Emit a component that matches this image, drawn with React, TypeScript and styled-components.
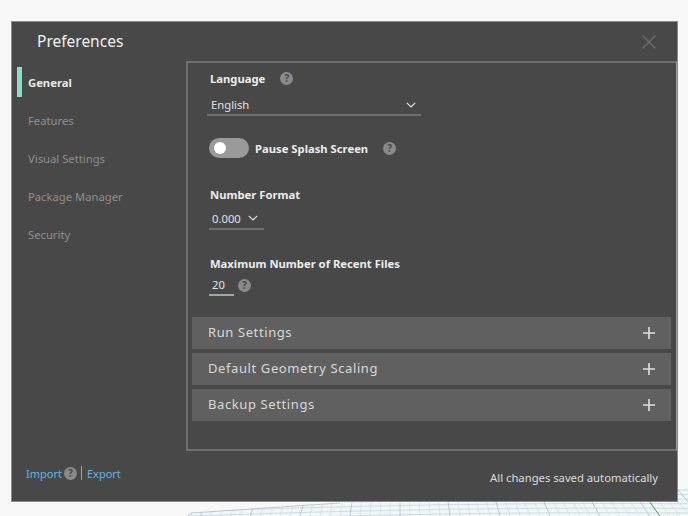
import styled, { createGlobalStyle } from "styled-components";

const GlobalStyle = createGlobalStyle`
    html, body {
        margin: 0;
        height: 100%;
        background: #f8f8f8;
        overflow: hidden;
    }
    * {
        box-sizing: border-box;
    }
`

const Help = () => <HelpDot>?</HelpDot>

const Chevron = () => (
    <svg width="10" height="6" viewBox="0 0 10 6" fill="none" stroke="#e6e6e6" strokeWidth="1.2">
        <path d="M0.8 0.8 L5 5 L9.2 0.8" />
    </svg>
)

const Plus = () => (
    <svg width="14" height="14" viewBox="0 0 14 14" stroke="#e0e0e0" strokeWidth="1.6">
        <path d="M7 1 V13 M1 7 H13" />
    </svg>
)

// workplane grid that shows behind the dialog, coordinates are page pixels
const Grid = () => {
    const fan = []
    for (let i = -24; i < 32; i++) {
        const bottom = i * 10
        const x = 400 + bottom
        const topX = 400 + (bottom * (486 - 160)) / 356
        fan.push(<path key={i} d={`M${topX} 486 L${x} 516`} stroke={i % 5 === 0 ? "#a4b7be" : "#cbdce3"} />)
    }
    const rows = []
    for (let i = 0; i < 7; i++) {
        const y = 490 + i * 4.6
        rows.push(<path key={i} d={`M180 ${y + 8} Q450 ${y - 2} 688 ${y}`} />)
    }
    return (
        <GridSvg viewBox="0 0 688 516" width="688" height="516" fill="none" stroke="#bfd1d8" strokeWidth="0.7">
            <clipPath id="plate">
                <path d="M188 516 L191 513 L340 503 L500 497 L688 488 L688 516 Z" />
            </clipPath>
            <g clipPath="url(#plate)">
                <rect x="180" y="486" width="508" height="30" fill="#f1f7f9" stroke="none" />
                {rows}
                {fan}
                <path d="M649 501 L660 516" stroke="#3caa55" strokeWidth="1" />
            </g>
            <path d="M188 516 L191 513 L340 503" stroke="#a4b7be" />
        </GridSvg>
    )
}

export default function App() {
    const tabs = ["General", "Features", "Visual Settings", "Package Manager", "Security"]
    const sections = ["Run Settings", "Default Geometry Scaling", "Backup Settings"]

    return (
        <>
            <GlobalStyle />
            <Grid />
            <Page>
                <Modal>
                    <Header>
                        <Title>Preferences</Title>
                        <CloseIcon width="14" height="14" viewBox="0 0 14 14" stroke="#6c6c6c" strokeWidth="1.4">
                            <path d="M0.5 0.5 L13.5 13.5 M13.5 0.5 L0.5 13.5" />
                        </CloseIcon>
                    </Header>
                    <Body>
                        <Sidebar>
                            {tabs.map((tab, i) => (
                                <Tab key={tab} $active={i === 0}>{tab}</Tab>
                            ))}
                        </Sidebar>
                        <Panel>
                            <Settings>
                                <LabelRow>
                                    <Label>Language</Label>
                                    <Help />
                                </LabelRow>
                                <LanguageSelect>
                                    <span>English</span>
                                    <Chevron />
                                </LanguageSelect>
                                <ToggleRow>
                                    <Toggle><Knob /></Toggle>
                                    <Label>Pause Splash Screen</Label>
                                    <Help />
                                </ToggleRow>
                                <FormatLabel>Number Format</FormatLabel>
                                <FormatSelect>
                                    <span>0.000</span>
                                    <Chevron />
                                </FormatSelect>
                                <RecentLabel>Maximum Number of Recent Files</RecentLabel>
                                <RecentRow>
                                    <RecentInput>20</RecentInput>
                                    <Help />
                                </RecentRow>
                            </Settings>
                            <Sections>
                                {sections.map((s) => (
                                    <Section key={s}>
                                        <span>{s}</span>
                                        <Plus />
                                    </Section>
                                ))}
                            </Sections>
                        </Panel>
                    </Body>
                    <Footer>
                        <FooterLinks>
                            <FooterLink>Import</FooterLink>
                            <Help />
                            <Divider />
                            <FooterLink>Export</FooterLink>
                        </FooterLinks>
                        <Saved>All changes saved automatically</Saved>
                    </Footer>
                </Modal>
            </Page>
        </>
    )
}

const GridSvg = styled.svg`
    position: absolute;
    left: 0;
    top: 0;
`

const Page = styled.div`
    position: relative;
    padding: 21px 0 0 11px;
    font-family: "Noto Sans", "Open Sans", sans-serif;
`

const Modal = styled.div`
    width: 667px;
    height: 481px;
    background: #484848;
    border: 1px solid #8a8a8a;
    display: flex;
    flex-direction: column;
`

const Header = styled.div`
    height: 39px;
    flex-shrink: 0;
    display: flex;
    align-items: center;
    justify-content: space-between;
    padding: 0 21px 0 25px;
`

const Title = styled.h1`
    margin: -2px 0 0;
    font-size: 15.5px;
    font-weight: 400;
    color: #f0f0f0;
`

const CloseIcon = styled.svg`
    display: block;
`

const Body = styled.div`
    height: 390px;
    flex-shrink: 0;
    display: flex;
`

const Sidebar = styled.div`
    width: 174px;
    flex-shrink: 0;
    padding: 6px 0 0 5px;
    display: flex;
    flex-direction: column;
    gap: 8px;
`

const Tab = styled.div<{ $active?: boolean }>`
    height: 30px;
    display: flex;
    align-items: center;
    padding: 1px 0 0 6px;
    border-left: 5px solid ${(p) => (p.$active ? "#8fdccf" : "transparent")};
    font-size: 11.25px;
    font-weight: ${(p) => (p.$active ? 700 : 400)};
    color: ${(p) => (p.$active ? "#e8e8e8" : "#8f8f8f")};
`

const Panel = styled.div`
    flex: 1;
    border: 2px solid #6e6e6e;
    border-right-width: 1px;
    border-right-color: #a0a0a0;
    padding: 0 5px 0 4px;
    display: flex;
    flex-direction: column;
`

const Settings = styled.div`
    padding: 6px 0 0 18px;
    height: 254px;
    flex-shrink: 0;
    display: flex;
    flex-direction: column;
    align-items: flex-start;
`

const Label = styled.span`
    font-size: 11.25px;
    font-weight: 700;
    color: #ececec;
`

const LabelRow = styled.div`
    height: 18px;
    display: flex;
    align-items: center;
    gap: 15px;
`

const HelpDot = styled.span`
    width: 13px;
    height: 13px;
    flex-shrink: 0;
    border-radius: 50%;
    background: #8a8a8a;
    color: #484848;
    font-size: 10px;
    font-weight: 700;
    line-height: 13px;
    text-align: center;
`

const LanguageSelect = styled.div`
    width: 214px;
    height: 20px;
    margin: 9px 0 0 -3px;
    padding: 0 5px 0 4px;
    border-bottom: 2px solid #6c7073;
    display: flex;
    align-items: center;
    justify-content: space-between;
    font-size: 11.25px;
    color: #e0e0e0;

    span {
        margin-top: -2px;
    }
`

const ToggleRow = styled.div`
    height: 20px;
    margin: 22px 0 0 -1px;
    display: flex;
    align-items: center;
    gap: 6px;

    ${HelpDot} {
        margin-left: 9px;
    }
`

const Toggle = styled.div`
    width: 40px;
    height: 20px;
    border-radius: 10px;
    background: #9a9a9a;
    display: flex;
    align-items: center;
    padding-left: 5px;
`

const Knob = styled.div`
    width: 12px;
    height: 12px;
    border-radius: 50%;
    background: #ffffff;
`

const FormatLabel = styled(Label)`
    margin-top: 29px;
`

const FormatSelect = styled.div`
    width: 55px;
    height: 20px;
    margin: 8px 0 0 -1px;
    padding: 0 6px 2px 3px;
    border-bottom: 2px solid #6c7073;
    display: flex;
    align-items: center;
    justify-content: space-between;
    font-size: 11.25px;
    color: #e0e0e0;
`

const RecentLabel = styled(Label)`
    margin-top: 26px;
`

const RecentRow = styled.div`
    margin: 6px 0 0 -1px;
    display: flex;
    align-items: center;
    gap: 4px;

    ${HelpDot} {
        margin-top: -3px;
    }
`

const RecentInput = styled.div`
    width: 25px;
    height: 19px;
    padding-left: 3px;
    border-bottom: 2px solid #a4a4a4;
    font-size: 11.25px;
    line-height: 15px;
    color: #e0e0e0;
`

const Sections = styled.div`
    display: flex;
    flex-direction: column;
    gap: 4px;
`

const Section = styled.div`
    height: 32px;
    padding: 0 15px 0 16px;
    background: #606060;
    display: flex;
    align-items: center;
    justify-content: space-between;
    font-size: 13px;
    letter-spacing: 0.6px;
    color: #d8d8d8;

    span {
        margin-top: -2px;
    }
`

const Footer = styled.div`
    flex: 1;
    display: flex;
    align-items: center;
    justify-content: space-between;
    padding: 0 19px 0 14px;
`

const FooterLinks = styled.div`
    display: flex;
    align-items: center;
    gap: 2px;
    margin-top: -6px;
`

const FooterLink = styled.span`
    font-size: 11px;
    color: #5fb4e8;
`

const Divider = styled.span`
    width: 1px;
    height: 14px;
    margin: 0 3px 0 2px;
    background: #5fb4e8;
`

const Saved = styled.span`
    font-size: 11.25px;
    color: #dcdcdc;
    margin-top: 3px;
`
